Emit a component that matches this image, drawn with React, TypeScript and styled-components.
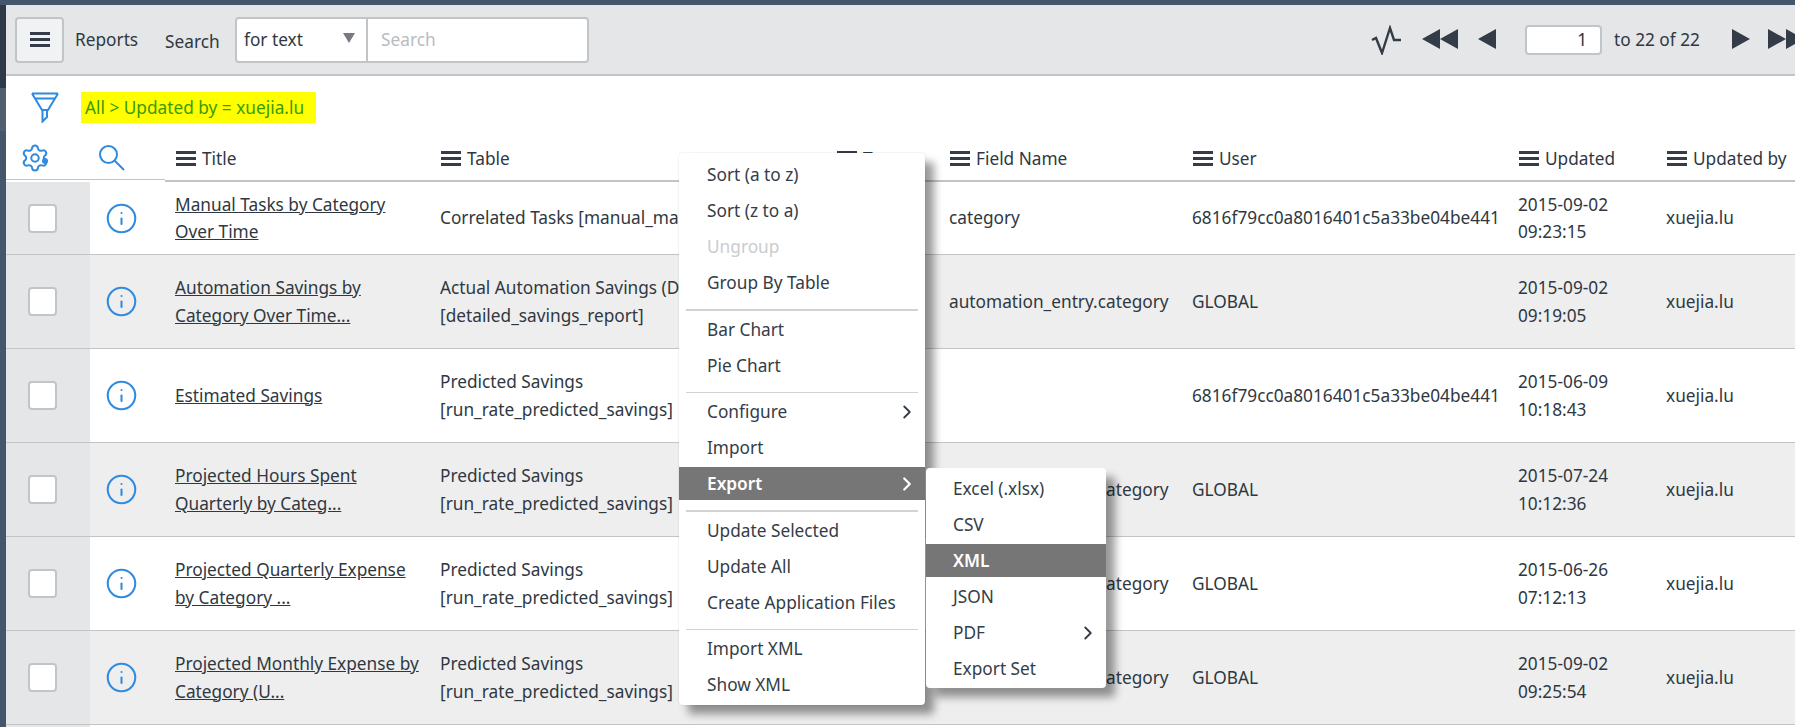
import React from "react";
import styled, { createGlobalStyle } from "styled-components";
import { ChevronRight, Info, Settings } from "lucide-react";

const GlobalStyle = createGlobalStyle`
  html, body {
    margin: 0;
    height: 100%;
    overflow: hidden;
    background: #fff;
    font-family: "Noto Sans", "Lato", sans-serif;
    color: #2f3842;
  }
  * { box-sizing: border-box; }
`;

const COLUMNS = "84px 75px 265px 396px 113px 243px 326px 148px 1fr";

type RowData = {
  title: string[];
  table: string[];
  field: string;
  user: string;
  updated: string[];
};

const rows: RowData[] = [
  {
    title: ["Manual Tasks by Category", "Over Time"],
    table: ["Correlated Tasks [manual_matches]"],
    field: "category",
    user: "6816f79cc0a8016401c5a33be04be441",
    updated: ["2015-09-02", "09:23:15"],
  },
  {
    title: ["Automation Savings by", "Category Over Time..."],
    table: ["Actual Automation Savings (Detail)", "[detailed_savings_report]"],
    field: "automation_entry.category",
    user: "GLOBAL",
    updated: ["2015-09-02", "09:19:05"],
  },
  {
    title: ["Estimated Savings"],
    table: ["Predicted Savings", "[run_rate_predicted_savings]"],
    field: "",
    user: "6816f79cc0a8016401c5a33be04be441",
    updated: ["2015-06-09", "10:18:43"],
  },
  {
    title: ["Projected Hours Spent", "Quarterly by Categ..."],
    table: ["Predicted Savings", "[run_rate_predicted_savings]"],
    field: "automation_entry.category",
    user: "GLOBAL",
    updated: ["2015-07-24", "10:12:36"],
  },
  {
    title: ["Projected Quarterly Expense", "by Category ..."],
    table: ["Predicted Savings", "[run_rate_predicted_savings]"],
    field: "automation_entry.category",
    user: "GLOBAL",
    updated: ["2015-06-26", "07:12:13"],
  },
  {
    title: ["Projected Monthly Expense by", "Category (U..."],
    table: ["Predicted Savings", "[run_rate_predicted_savings]"],
    field: "automation_entry.category",
    user: "GLOBAL",
    updated: ["2015-09-02", "09:25:54"],
  },
];

const columnHeads = ["Title", "Table", "Type", "Field Name", "User", "Updated", "Updated by"];

const Bars = () => (
  <svg width="20" height="15" viewBox="0 0 20 15">
    <rect x="0" y="0" width="20" height="3" fill="#343d47" />
    <rect x="0" y="6" width="20" height="3" fill="#343d47" />
    <rect x="0" y="12" width="20" height="3" fill="#343d47" />
  </svg>
);

const Triangle = ({ dir }: { dir: "left" | "right" }) => (
  <svg width="18" height="20" viewBox="0 0 18 20">
    <polygon points={dir === "left" ? "18,0 18,20 0,10" : "0,0 0,20 18,10"} fill="#343d47" />
  </svg>
);

const App = () => {
  return (
    <Page>
      <GlobalStyle />
      <Toolbar>
        <MenuButton>
          <Bars />
        </MenuButton>
        <ToolbarTitle>Reports</ToolbarTitle>
        <SearchLabel>Search</SearchLabel>
        <SearchGroup>
          <SelectBox>
            for text
            <SelectArrow />
          </SelectBox>
          <SearchInput>Search</SearchInput>
        </SearchGroup>
        <Pager>
          <svg width="30" height="30" viewBox="0 0 30 30">
            <polyline
              points="1,15 5,13 11,28 19,3 23,15 30,15"
              fill="none"
              stroke="#343d47"
              strokeWidth="2.4"
            />
          </svg>
          <ArrowGroup $gap={21}>
            <Triangle dir="left" />
            <Triangle dir="left" />
          </ArrowGroup>
          <ArrowGroup $gap={20}>
            <Triangle dir="left" />
          </ArrowGroup>
          <PageInput>1</PageInput>
          <PageCount>to 22 of 22</PageCount>
          <ArrowGroup $gap={0}>
            <Triangle dir="right" />
          </ArrowGroup>
          <ArrowGroup $gap={18}>
            <Triangle dir="right" />
            <Triangle dir="right" />
          </ArrowGroup>
        </Pager>
      </Toolbar>

      <FilterRow>
        <svg width="28" height="31" viewBox="0 0 28 31">
          <path
            d="M1 1.5h26M3.500 6.500h21M1 1.500l10 16.500h6l10-16.500M11.500 18v11.500l4.500-4.500v-7"
            fill="none"
            stroke="#2f8ae0"
            strokeWidth="2"
          />
        </svg>
        <Breadcrumb>All &gt; Updated by = xuejia.lu</Breadcrumb>
      </FilterRow>

      <HeaderRow>
        <GearCell>
          <Settings size={30} strokeWidth={1.6} color="#2f8ae0" />
        </GearCell>
        <LensCell>
          <svg width="26" height="26" viewBox="0 0 26 26">
            <circle cx="9.500" cy="9.500" r="8.500" fill="none" stroke="#2f8ae0" strokeWidth="2" />
            <line x1="15.500" y1="15.500" x2="25" y2="25" stroke="#2f8ae0" strokeWidth="2" />
          </svg>
        </LensCell>
        {columnHeads.map((label) => (
          <HeaderCell key={label}>
            <Bars />
            {label}
          </HeaderCell>
        ))}
      </HeaderRow>

      <div>
        {rows.map((row) => (
          <Row key={row.title[0]}>
            <CheckCell>
              <Checkbox />
            </CheckCell>
            <InfoCell>
              <Info size={33} strokeWidth={1.5} color="#2f8ae0" />
            </InfoCell>
            <Cell>
              <TextStack>
                {row.title.map((line) => (
                  <u key={line}>{line}</u>
                ))}
              </TextStack>
            </Cell>
            <Cell>
              <TextStack>
                {row.table.map((line) => (
                  <span key={line}>{line}</span>
                ))}
              </TextStack>
            </Cell>
            <Cell />
            <Cell>{row.field}</Cell>
            <Cell>{row.user}</Cell>
            <Cell>
              <TextStack>
                {row.updated.map((line) => (
                  <span key={line}>{line}</span>
                ))}
              </TextStack>
            </Cell>
            <Cell>xuejia.lu</Cell>
          </Row>
        ))}
        <Row>
          <CheckCell />
        </Row>
      </div>

      <ContextMenu>
        <MenuItem>Sort (a to z)</MenuItem>
        <MenuItem>Sort (z to a)</MenuItem>
        <MenuItem $disabled>Ungroup</MenuItem>
        <MenuItem>Group By Table</MenuItem>
        <MenuDivider $thick />
        <MenuItem>Bar Chart</MenuItem>
        <MenuItem>Pie Chart</MenuItem>
        <MenuDivider />
        <MenuItem>
          Configure
          <ChevronRight size={22} strokeWidth={2} />
        </MenuItem>
        <MenuItem>Import</MenuItem>
        <MenuItem $active>
          Export
          <ChevronRight size={22} strokeWidth={2.5} />
        </MenuItem>
        <MenuDivider $thick />
        <MenuItem>Update Selected</MenuItem>
        <MenuItem>Update All</MenuItem>
        <MenuItem>Create Application Files</MenuItem>
        <MenuDivider />
        <MenuItem>Import XML</MenuItem>
        <MenuItem>Show XML</MenuItem>
      </ContextMenu>

      <SubMenu>
        <SubItem>Excel (.xlsx)</SubItem>
        <SubItem>CSV</SubItem>
        <SubItem $active>XML</SubItem>
        <SubItem>JSON</SubItem>
        <SubItem>
          PDF
          <ChevronRight size={22} strokeWidth={2} />
        </SubItem>
        <SubItem>Export Set</SubItem>
      </SubMenu>
    </Page>
  );
};

export default App;

const Page = styled.div`
  position: relative;
  width: 1795px;
  height: 727px;
  padding: 5px 0 0 6px;
  overflow: hidden;
  font-size: 17.25px;
  background: linear-gradient(
    to bottom,
    #44566b 5px,
    #2e3a46 5px,
    #2e3a46 88px,
    #4f5f70 88px,
    #4f5f70 131px,
    #44566b 131px
  );

  &::before {
    content: "";
    position: absolute;
    top: 0;
    left: 0;
    right: 0;
    height: 5px;
    background: #44566b;
  }
`;

const Toolbar = styled.header`
  display: flex;
  align-items: center;
  height: 71px;
  padding-left: 9px;
  background: #e4e6e7;
  border-bottom: 2px solid #c2c5c8;
`;

const MenuButton = styled.button`
  display: flex;
  align-items: center;
  justify-content: center;
  width: 49px;
  height: 46px;
  padding: 0;
  background: #f1f2f3;
  border: 2px solid #c2c5c8;
  border-radius: 4px;
`;

const ToolbarTitle = styled.span`
  width: 90px;
  margin-left: 11px;
  white-space: nowrap;
`;

const SearchLabel = styled.span`
  width: 70px;
  margin-top: 3px;
  white-space: nowrap;
`;

const SearchGroup = styled.div`
  display: flex;
  width: 354px;
  height: 46px;
  background: #fff;
  border: 2px solid #c2c5c8;
  border-radius: 4px;
`;

const SelectBox = styled.div`
  position: relative;
  display: flex;
  align-items: center;
  width: 131px;
  padding-left: 7px;
  border-right: 2px solid #c2c5c8;
`;

const SelectArrow = styled.i`
  position: absolute;
  top: 14px;
  right: 11px;
  border-left: 6px solid transparent;
  border-right: 6px solid transparent;
  border-top: 10px solid #777b7f;
`;

const SearchInput = styled.div`
  display: flex;
  align-items: center;
  padding-left: 13px;
  color: #b7bcc0;
`;

const Pager = styled.div`
  display: flex;
  align-items: center;
  margin-left: auto;
  margin-right: -9px;
  flex-shrink: 0;
`;

const ArrowGroup = styled.div<{ $gap: number }>`
  display: flex;
  margin-left: ${({ $gap }) => $gap}px;
  margin-top: -2px;
`;

const PageInput = styled.div`
  width: 77px;
  height: 30px;
  margin-left: 29px;
  padding-right: 13px;
  line-height: 26px;
  text-align: right;
  background: #fff;
  border: 2px solid #c2c5c8;
  border-radius: 4px;
`;

const PageCount = styled.span`
  width: 130px;
  padding-left: 12px;
  white-space: nowrap;
`;

const FilterRow = styled.div`
  display: flex;
  align-items: center;
  height: 60px;
  padding: 2px 0 0 25px;
  background: #fff;
`;

const Breadcrumb = styled.span`
  width: 235px;
  height: 31px;
  margin-left: 22px;
  padding-left: 4px;
  line-height: 31px;
  white-space: nowrap;
  color: #3a9b00;
  background: #ffff00;
`;

const HeaderRow = styled.div`
  display: grid;
  grid-template-columns: ${COLUMNS};
  height: 46px;
  background: #fff;
`;

const GearCell = styled.div`
  position: relative;
  display: flex;
  align-items: center;
  height: 44px;
  padding-left: 14px;
  border-bottom: 1px solid #c2c5c8;

  &::after {
    content: "";
    position: absolute;
    top: 22px;
    left: 36px;
    width: 6px;
    height: 6px;
    background: #2f8ae0;
    border-radius: 50%;
  }
`;

const LensCell = styled.div`
  display: flex;
  align-items: center;
  height: 44px;
  padding-left: 9px;
  border-bottom: 1px solid #c2c5c8;
`;

const HeaderCell = styled.div`
  display: flex;
  align-items: center;
  gap: 6px;
  padding-left: 11px;
  white-space: nowrap;
  border-bottom: 2px solid #c2c5c8;
`;

const Row = styled.div`
  display: grid;
  grid-template-columns: ${COLUMNS};
  height: 94px;
  background: #fff;
  border-bottom: 1px solid #c2c5c8;

  &:first-child {
    height: 73px;
  }

  &:nth-child(even) {
    background: #eeeeee;
  }
`;

const CheckCell = styled.div`
  display: flex;
  align-items: center;
  padding-left: 22px;
  background: #e4e6e7;
`;

const Checkbox = styled.div`
  width: 29px;
  height: 29px;
  background: #fff;
  border: 2px solid #c2c5c8;
  border-radius: 4px;
`;

const InfoCell = styled.div`
  display: flex;
  align-items: center;
  padding-left: 15px;
`;

const Cell = styled.div`
  display: flex;
  align-items: center;
  padding-left: 10px;
  line-height: 27.5px;
  white-space: nowrap;
`;

const TextStack = styled.div`
  display: flex;
  flex-direction: column;
`;

const ContextMenu = styled.nav`
  position: absolute;
  top: 153px;
  left: 679px;
  display: flex;
  flex-direction: column;
  width: 246px;
  height: 552px;
  padding-top: 3.500px;
  background: #fff;
  border-radius: 4px;
  box-shadow: 9px 9px 9px rgba(0, 0, 0, 0.4), 0 0 2px rgba(0, 0, 0, 0.15);
`;

const MenuItem = styled.div<{ $active?: boolean; $disabled?: boolean }>`
  display: flex;
  align-items: center;
  justify-content: space-between;
  flex: none;
  height: 33px;
  margin: 1.500px 0;
  padding: 0 7px 0 28px;
  color: ${({ $active, $disabled }) => ($active ? "#fff" : $disabled ? "#c9cccf" : "#343d47")};
  font-weight: ${({ $active }) => ($active ? 600 : 400)};
  background: ${({ $active }) => ($active ? "#767676" : "transparent")};
`;

const MenuDivider = styled.hr<{ $thick?: boolean }>`
  flex: none;
  width: 232px;
  height: ${({ $thick }) => ($thick ? 2 : 1)}px;
  margin: ${({ $thick }) => ($thick ? "8px 0 1px 7px" : "8px 0 1px 7px")};
  background: #d0d2d4;
  border: 0;
`;

const SubMenu = styled.nav`
  position: absolute;
  top: 468px;
  left: 926px;
  display: flex;
  flex-direction: column;
  width: 180px;
  height: 220px;
  padding-top: 2.500px;
  background: #fff;
  border-radius: 4px;
  box-shadow: 9px 9px 9px rgba(0, 0, 0, 0.4);
`;

const SubItem = styled(MenuItem)`
  padding-left: 27px;
`;
